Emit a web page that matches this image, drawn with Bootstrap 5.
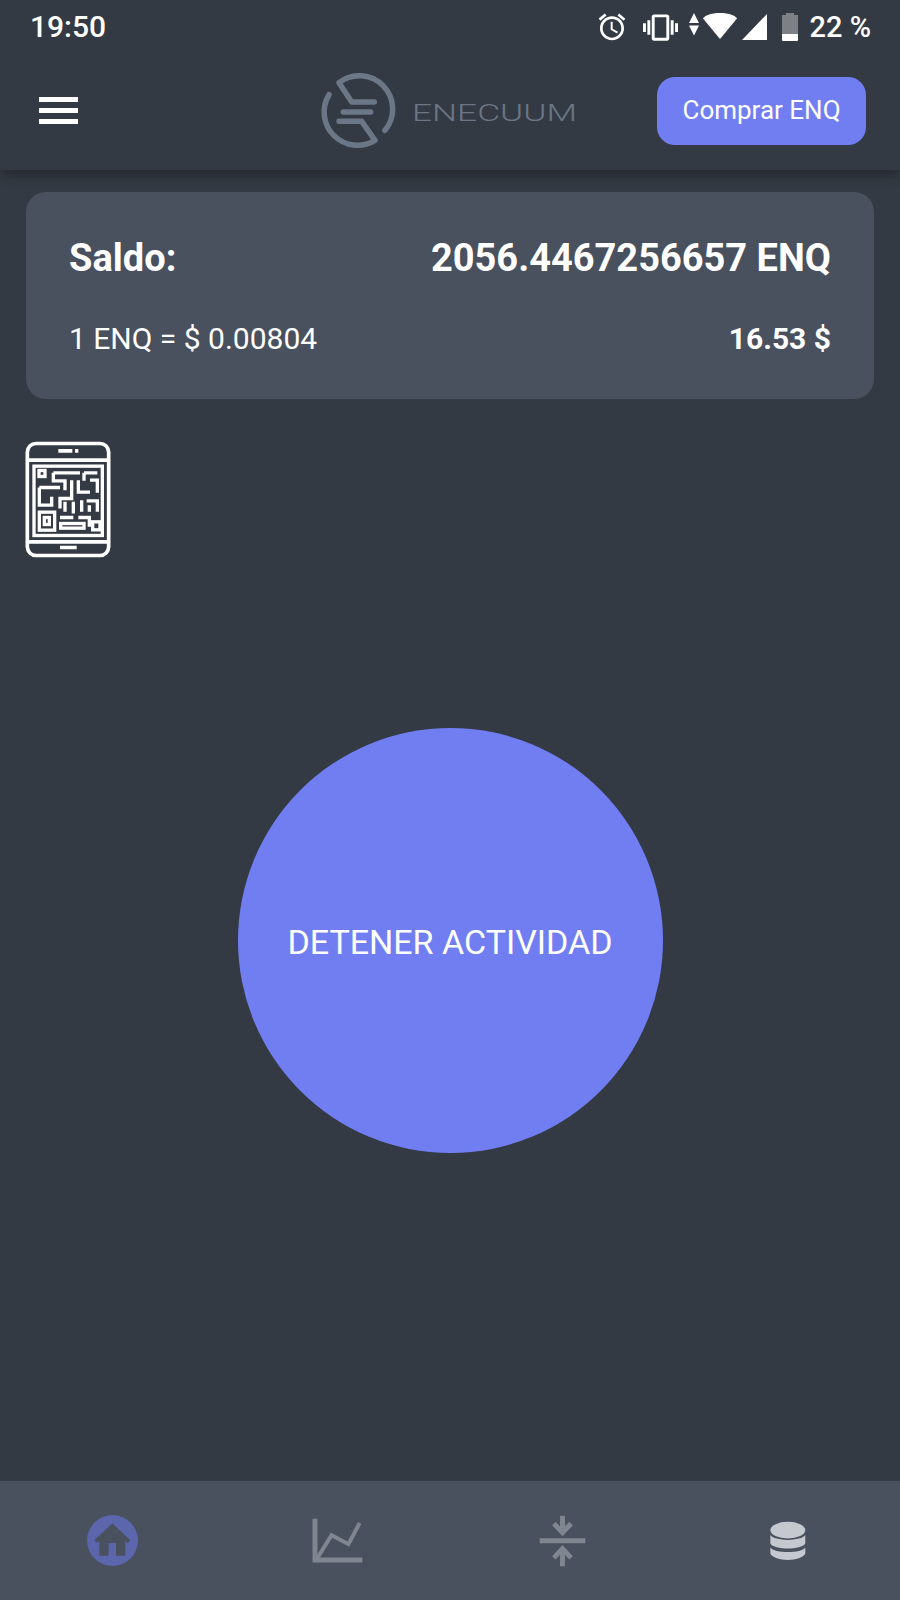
<!DOCTYPE html>
<html lang="es">
<head>
  <meta charset="UTF-8">
  <title>Enecuum</title>
  <link href="https://cdn.jsdelivr.net/npm/bootstrap@5.3.3/dist/css/bootstrap.min.css" rel="stylesheet">
  <style>
    body { background: #343a43; color: #fff; font-family: Roboto, "Liberation Sans", sans-serif; height: 1600px; overflow: hidden; }
    .app-shell { height: 1600px; }
    .status-row { height: 58px; padding: 0 29px 4px 30px; background: #343a43; position: relative; z-index: 3; }
    .status-time { font-size: 30px; font-weight: 500; line-height: 1; }
    .status-pct { font-size: 29px; font-weight: 500; line-height: 1; margin-left: 10px; }
    .status-icons svg { display: block; flex: none; }
    .vib-icon { margin-left: 15px; }
    .net-icon { margin-left: 11px; }
    .batt-icon { margin-left: 12px; }
    .top-bar { height: 112px; background: #343a43; padding: 0 34px 0 39px; box-shadow: 0 5px 12px rgba(0, 0, 0, .3); position: relative; z-index: 2; }
    .burger { width: 39px; height: 27px; margin-top: -7px; }
    .burger i { display: block; height: 5px; background: #fff; }
    .brand-logo { margin-left: 240px; margin-top: -5px; }
    .buy-btn { width: 209px; height: 68px; background: #717ef2; border: 0; border-radius: 18px; color: #fff; font-size: 26px; margin-left: auto; margin-top: -7px; padding: 0; }
    .balance-card { margin: 22px 26px 0; height: 207px; background: #49505e; border: 0; border-radius: 20px; padding: 44px 43px 0 43px; color: #fff; }
    .balance-big { font-size: 38px; font-weight: 700; line-height: 44px; }
    .balance-small { font-size: 30px; line-height: 36px; margin-top: 41px; }
    .qr-icon { margin: 42px 0 0 25px; display: block; }
    .stop-btn { width: 425px; height: 425px; margin-top: 170px; background: #717ef2; color: #fff; font-size: 34px; border: 0; padding: 4px 0 0; }
    .tab-bar { height: 119px; background: #49505e; }
    .tab-bar svg { display: block; }
  </style>
</head>
<body>
  <div class="app-shell d-flex flex-column">
    <div class="status-row d-flex align-items-center justify-content-between">
      <span class="status-time">19:50</span>
      <div class="status-icons d-flex align-items-center">
        <svg width="32" height="32" viewBox="0 0 24 24" fill="#fff"><path d="M22 5.72l-4.6-3.86-1.29 1.53 4.6 3.86L22 5.72zM7.88 3.39L6.6 1.86 2 5.71l1.29 1.53 4.59-3.85zM12.5 8H11v6l4.75 2.85.75-1.23-4-2.37V8zM12 4c-4.97 0-9 4.03-9 9s4.03 9 9 9 9-4.03 9-9-4.03-9-9-9zm0 16c-3.87 0-7-3.13-7-7s3.13-7 7-7 7 3.13 7 7-3.13 7-7 7z"/></svg>
        <svg class="vib-icon" width="35" height="35" viewBox="0 0 24 24" fill="#fff"><path d="M0 15h2V9H0v6zm3 2h2V7H3v10zm19-8v6h2V9h-2zm-3 8h2V7h-2v10zM16.5 3h-9C6.67 3 6 3.67 6 4.5v15c0 .83.67 1.5 1.5 1.5h9c.83 0 1.5-.67 1.5-1.5v-15c0-.83-.67-1.5-1.5-1.5zM16 19H8V5h8v14z"/></svg>
        <svg class="net-icon" width="80" height="28" viewBox="0 0 80 28" fill="#fff">
          <path d="M5 0L10 10H0zM0 12.500h10L5 22.500z"/>
          <path d="M31 0C21.500 0 15.500 2.500 14 5.500L31 26 48 5.500C46.500 2.500 40.500 0 31 0z"/>
          <path d="M78 1V27H53z"/>
        </svg>
        <svg class="batt-icon" width="18" height="28" viewBox="0 0 18 28"><path fill="#7d8186" d="M5 0h8v2h4v20H1V2h4z"/><path fill="#fff" d="M1 21h16v6a1 1 0 0 1-1 1H2a1 1 0 0 1-1-1z"/></svg>
        <span class="status-pct">22 %</span>
      </div>
    </div>

    <nav class="top-bar navbar flex-nowrap justify-content-start">
      <div class="burger d-flex flex-column justify-content-between"><i></i><i></i><i></i></div>
      <svg class="brand-logo" width="259" height="78" viewBox="-3 -3 259 78" fill="none">
        <g stroke="#6b7686" stroke-width="5.500" stroke-linecap="round" stroke-linejoin="round">
          <path d="M8 18.700A33.300 33.300 0 0 0 54 64.300L40.700 45.300H18"/>
          <path d="M64 54.300A33.300 33.300 0 0 0 18 6.700L30.700 26H53.300"/>
          <path d="M22.300 36H49.700"/>
        </g>
        <text x="91" y="45" textLength="165" lengthAdjust="spacingAndGlyphs" fill="#6b7686" font-family="Roboto, sans-serif" font-weight="300" font-size="24.500">ENECUUM</text>
      </svg>
      <button class="buy-btn btn" type="button">Comprar ENQ</button>
    </nav>

    <div class="balance-card card">
      <div class="balance-big d-flex justify-content-between"><span>Saldo:</span><span>2056.4467256657 ENQ</span></div>
      <div class="balance-small d-flex justify-content-between"><span>1 ENQ = $ 0.00804</span><span class="fw-bold">16.53 $</span></div>
    </div>

    <svg class="qr-icon" width="87" height="117" viewBox="45 33 261 350" fill="none" stroke="#fff" stroke-width="11">
      <rect x="52" y="40" width="244" height="336" rx="26"/>
      <path d="M52 90H296M52 335H296M145 62H187M195 62H205M150 352H200"/>
      <g stroke-width="10">
        <rect x="72" y="108" width="205" height="208"/>
        <rect x="87" y="121" width="18" height="18"/>
        <path d="M130 128H210M130 128V152H165V180M222 128H262M240 150H262V188M222 128V152M205 150V186H240M185 150V205H150V235M88 172H150M88 172V225H125V200"/>
        <path d="M165 245V215M190 250V215M215 245V210M230 212H262V245M238 225V245"/>
        <rect x="88" y="246" width="46" height="54"/>
        <rect x="103" y="262" width="15" height="21"/>
        <path d="M150 262H190M205 262H238V290"/>
        <rect x="152" y="280" width="70" height="14"/>
        <rect x="248" y="275" width="22" height="24"/>
      </g>
    </svg>

    <button class="stop-btn btn rounded-circle align-self-center" type="button">DETENER ACTIVIDAD</button>

    <div class="tab-bar row g-0 mt-auto">
      <div class="col-3 d-flex align-items-center justify-content-center">
        <svg width="51" height="51" viewBox="0 0 153 153"><circle cx="76.500" cy="76.500" r="76.500" fill="#5b66ac"/><path fill="#49505e" d="M76 25L130 76 122 84 115 78V122H87V84H65V122H37V78L30 84 22 76z"/></svg>
      </div>
      <div class="col-3 d-flex align-items-center justify-content-center">
        <svg width="53" height="48" viewBox="930 140 160 145" fill="none" stroke="#7f868f" stroke-width="15"><path d="M942 145V270H1085"/><path d="M948 266L992 195 1043 222 1077 158" stroke-width="12"/></svg>
      </div>
      <div class="col-3 d-flex align-items-center justify-content-center">
        <svg width="49" height="54" viewBox="262 130 148 162" fill="none" stroke="#7f868f" stroke-width="15"><path d="M267 210H405"/><path d="M336 135V188M310 158L336 186 362 158M336 287V234M310 262L336 234 362 262"/></svg>
      </div>
      <div class="col-3 d-flex align-items-center justify-content-center">
        <svg width="38" height="42" viewBox="955 148 113 125" fill="#c5c9cf"><ellipse cx="1011" cy="178" rx="52" ry="25"/><path d="M959 193C970 212 1052 212 1063 193V218C1052 238 970 238 959 218zM959 230C970 248 1052 248 1063 230V248C1052 273 970 273 959 248z"/></svg>
      </div>
    </div>
  </div>
  <script src="https://cdn.jsdelivr.net/npm/bootstrap@5.3.3/dist/js/bootstrap.bundle.min.js"></script>
</body>
</html>
